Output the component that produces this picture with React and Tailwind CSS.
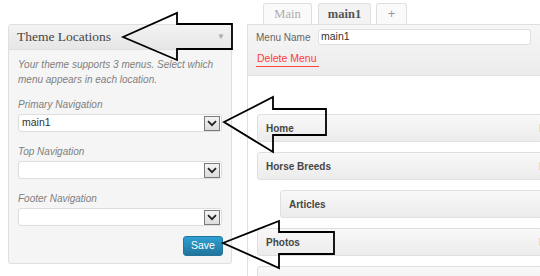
import React from "react";

const sans = { fontFamily: '"Liberation Sans", Arial, sans-serif' };
const serif = { fontFamily: '"Liberation Serif", "Times New Roman", serif' };

function SelectBox({ value }) {
  return (
    <div className="mt-[2px] h-[18px] w-[204px] rounded-[3px] border border-[#dddddd] bg-white flex items-center justify-between pl-[3px] pr-[1px]">
      <span className="text-[10.5px] text-[#333]">{value}</span>
      <div className="w-[16px] h-[15px] border border-[#7a7a7a] bg-gradient-to-b from-[#f4f4f4] to-[#dcdcdc] flex items-center justify-center">
        <svg width="10" height="7" viewBox="0 0 10 7">
          <path d="M1 1.2 L5 5.2 L9 1.2" fill="none" stroke="#222" strokeWidth="1.8" />
        </svg>
      </div>
    </div>
  );
}

function Label({ children, className = "" }) {
  return (
    <div className={"italic text-[10px] leading-[14px] text-[#808080] whitespace-nowrap " + className}>{children}</div>
  );
}

function Row({ name, indent = false }) {
  return (
    <div
      className={
        "h-[28px] w-[330px] shrink-0 rounded-[3px] border border-[#dfdfdf] bg-gradient-to-b from-[#f8f8f8] to-[#ececec] flex items-center pl-[8px] " +
        (indent ? "ml-[32px]" : "ml-[9px]")
      }
    >
      <span className="w-[273px] shrink-0 font-bold text-[10px] text-[#464646]">{name}</span>
      <span className="text-[10px] text-[#999]">{name ? "Page" : ""}</span>
    </div>
  );
}

export default function App() {
  return (
    <div className="relative w-[540px] h-[276px] overflow-hidden bg-white flex" style={sans}>
      {/* Left column */}
      <div className="w-[247px] shrink-0 pl-[8px] pt-[24px]">
        <div className="w-[224px] h-[240px] rounded-[3px] border border-[#dfdfdf] bg-[#f5f5f5] overflow-hidden">
          <div className="h-[25px] bg-gradient-to-b from-[#f3f3f3] to-[#e6e6e6] border-b border-[#dfdfdf] flex items-center justify-between pl-[8px] pr-[6px]">
            <span className="text-[13.5px] text-[#464646]" style={serif}>Theme Locations</span>
            <span className="text-[8px] text-[#aaa]">▼</span>
          </div>
          <div className="pl-[9px] pt-[7px]">
            <p className="italic text-[10px] leading-[15px] text-[#808080] whitespace-nowrap">
              Your theme supports 3 menus. Select which
              <br />
              menu appears in each location.
            </p>
            <Label className="mt-[11px]">Primary Navigation</Label>
            <SelectBox value="main1" />
            <Label className="mt-[13px]">Top Navigation</Label>
            <SelectBox value="" />
            <Label className="mt-[13px]">Footer Navigation</Label>
            <SelectBox value="" />
            <div className="flex justify-end w-[205px] mt-[10px]">
              <button className="h-[20px] w-[40px] rounded-[3px] border border-[#21759b] bg-gradient-to-b from-[#2e9fd2] to-[#21759b] text-white text-[10.5px] flex items-center justify-center">
                Save
              </button>
            </div>
          </div>
        </div>
      </div>

      {/* Right column */}
      <div className="flex-1 flex flex-col pt-[3px]">
        <div className="flex items-end h-[21px] pl-[16px] gap-[5px]">
          <div className="h-[21px] w-[49px] rounded-t-[3px] border border-b-0 border-[#dfdfdf] bg-[#fafafa] flex items-center justify-center text-[12.5px] text-[#aaa]" style={serif}>
            Main
          </div>
          <div className="h-[21px] w-[53px] ml-[1px] rounded-t-[3px] border border-b-0 border-[#dfdfdf] bg-[#f3f3f3] flex items-center justify-center text-[12.5px] font-bold text-[#555]" style={serif}>
            main1
          </div>
          <div className="h-[21px] w-[31px] rounded-t-[3px] border border-b-0 border-[#dfdfdf] bg-[#fafafa] flex items-center justify-center text-[13px] text-[#999]">
            +
          </div>
        </div>
        <div className="flex-1 border-l border-t border-[#dfdfdf] flex flex-col">
          <div className="h-[51px] bg-gradient-to-b from-[#f6f6f6] to-[#ececec] border-b border-[#dfdfdf] pl-[8px] pt-[4px]">
            <div className="flex items-center">
              <span className="w-[62px] text-[10px] text-[#666]">Menu Name</span>
              <div className="h-[16px] w-[213px] rounded-[3px] border border-[#dfdfdf] bg-white flex items-center pl-[2px] text-[10.5px] text-[#333]">
                main1
              </div>
            </div>
            <div className="mt-[6px] inline-block border-b border-[#ff4444] pb-[1px] pl-[1px] pr-[2px] text-[10.5px] leading-[14px] text-[#ff3b3b]">
              Delete Menu
            </div>
          </div>
          <div className="flex-1 bg-white pt-[38px] flex flex-col gap-[10px]">
            <Row name="Home" />
            <Row name="Horse Breeds" />
            <Row name="Articles" indent />
            <Row name="Photos" />
            <Row name="" />
          </div>
        </div>
      </div>

      {/* Annotation arrows overlay */}
      <svg className="absolute left-0 top-0 pointer-events-none" width="540" height="276" viewBox="0 0 540 276">
        <g fill="none" stroke="#000" strokeWidth="1.8" strokeLinejoin="miter">
          <polygon points="123,37 177,13 177,24 232,24 232,49 177,49 177,60" />
          <polygon points="224,122 273,97 273,109 326,109 326,135 273,135 273,152" />
          <polygon points="223,243 279,221 279,232 334,232 334,254 279,254 279,268" />
        </g>
      </svg>
    </div>
  );
}
